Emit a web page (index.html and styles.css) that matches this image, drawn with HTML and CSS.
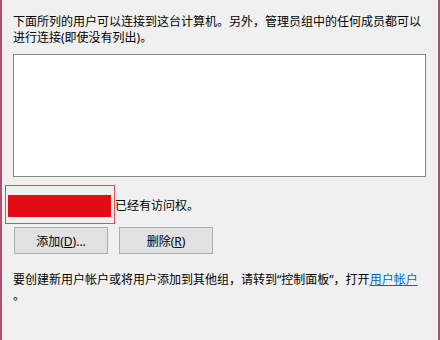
FILE: index.html
```html
<!DOCTYPE html>
<html lang="zh-CN">
<head>
  <meta charset="UTF-8">
  <title>远程桌面用户</title>
  <link rel="stylesheet" href="styles.css">
</head>
<body>
  <div class="window">
    <p class="intro">下面所列的用户可以连接到这台计算机。另外，管理员组中的任何成员都可以<br>进行连接(即使没有列出)。</p>
    <div class="user-list"></div>
    <div class="access-row">
      <span class="redacted"><span class="mark"></span></span>
      <span class="access-text">已经有访问权。</span>
    </div>
    <div class="buttons">
      <button>添加(<u>D</u>)...</button>
      <button>删除(<u>R</u>)</button>
    </div>
    <p class="hint">要创建新用户帐户或将用户添加到其他组，请转到“控制面板”，打开<a href="#">用户帐户</a><br>。</p>
  </div>
</body>
</html>
```

FILE: styles.css
```css
html, body {
  margin: 0;
  padding: 0;
}

body {
  font-family: "Noto Sans", "Noto Sans CJK SC", sans-serif;
  font-size: 12px;
  color: #000;
  background-color: #f0f0f0;
}

.window {
  box-sizing: border-box;
  height: 340px;
  padding: 14px 12px 0 11px;
  border-left: 2px solid #b0506e;
  border-right: 2px solid #b0506e;
  background-color: #f0f0f0;
}

.intro {
  margin: 0;
  line-height: 16px;
}

.user-list {
  height: 121px;
  margin-top: 8px;
  background-color: #fff;
  border: 1px solid #828790;
}

.access-row {
  display: flex;
  align-items: center;
  margin-top: 18px;
  height: 22px;
}

.redacted {
  position: relative;
  display: block;
  width: 103px;
  height: 22px;
  margin-left: -5px;
  background-color: #e50b13;
}

/* annotation frame drawn over the name */
.mark {
  position: absolute;
  left: -3px;
  top: -10px;
  right: -4px;
  bottom: -7px;
  border: 1px solid #e8484e;
}

.access-text {
  margin-left: 4px;
  margin-top: -3px;
}

.buttons {
  display: flex;
  gap: 11px;
  margin-top: 10px;
  margin-left: 1px;
}

button {
  width: 94px;
  height: 27px;
  padding: 0;
  font-family: inherit;
  font-size: 12px;
  color: #000;
  background-color: #e1e1e1;
  border: 1px solid #adadad;
  border-radius: 0;
}

.hint {
  margin: 18px 0 0;
  line-height: 16px;
}

.hint a {
  color: #0066cc;
  text-decoration: underline;
}
```
